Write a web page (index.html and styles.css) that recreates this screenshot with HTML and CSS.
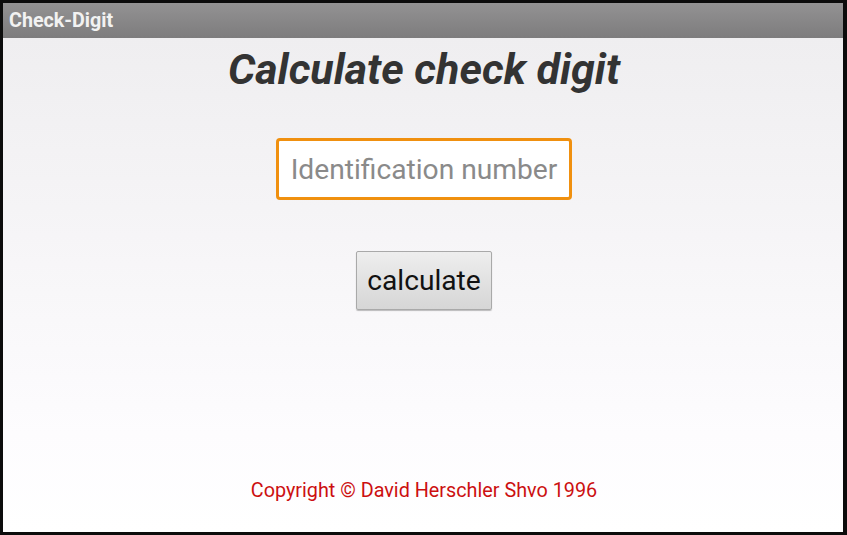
FILE: index.html
```html
<!DOCTYPE html>
<html>
<head>
<meta charset="utf-8">
<link rel="stylesheet" href="styles.css">
</head>
<body>
<div class="screen">
  <div class="titlebar">Check-Digit</div>
  <main class="content">
    <h1 class="heading">Calculate check digit</h1>
    <input class="idinput" type="text" placeholder="Identification number">
    <button class="calc">calculate</button>
    <div class="spacer"></div>
    <p class="copyright">Copyright © David Herschler Shvo 1996</p>
  </main>
</div>
</body>
</html>
```
FILE: styles.css
```css
html, body {
  margin: 0;
  padding: 0;
  background: #0c0c0c;
}
.screen {
  box-sizing: border-box;
  width: 847px;
  height: 535px;
  padding: 3px 4px 3px 3px;
  display: flex;
  flex-direction: column;
  font-family: Roboto, "Liberation Sans", sans-serif;
}
.titlebar {
  height: 35px;
  flex: none;
  background: linear-gradient(#939293, #7d7c7d);
  color: #f2f2f2;
  font-weight: bold;
  font-size: 19.7px;
  line-height: 35px;
  padding-left: 6px;
}
.content {
  flex: 1;
  background: linear-gradient(#efeef0, #fdfcfe 80%, #ffffff);
  display: flex;
  flex-direction: column;
  align-items: center;
  padding-left: 2px;
}
.heading {
  margin: 3px 0 0 0;
  font-size: 43px;
  font-weight: bold;
  font-style: italic;
  color: #333333;
  line-height: 56px;
}
.idinput {
  box-sizing: border-box;
  margin-top: 41px;
  width: 296px;
  height: 62px;
  border: 3px solid #f0900f;
  border-radius: 4px;
  background: #ffffff;
  font-family: Roboto, "Liberation Sans", sans-serif;
  font-size: 28.2px;
  padding: 0 8px;
  text-align: center;
  outline: none;
}
.idinput::placeholder {
  color: #8a8a8a;
}
.calc {
  box-sizing: border-box;
  margin-top: 51px;
  width: 136px;
  height: 59px;
  border: 1px solid #a9a9a9;
  border-radius: 2px;
  background: linear-gradient(#eeeeee, #d6d6d6);
  box-shadow: 0 1px 1px rgba(0,0,0,0.25);
  font-family: Roboto, "Liberation Sans", sans-serif;
  font-size: 28.2px;
  color: #111111;
  padding: 0;
}
.spacer {
  flex: 1;
}
.copyright {
  margin: 0 0 29px 0;
  color: #cc1010;
  font-size: 19.8px;
  line-height: 24px;
}
```
